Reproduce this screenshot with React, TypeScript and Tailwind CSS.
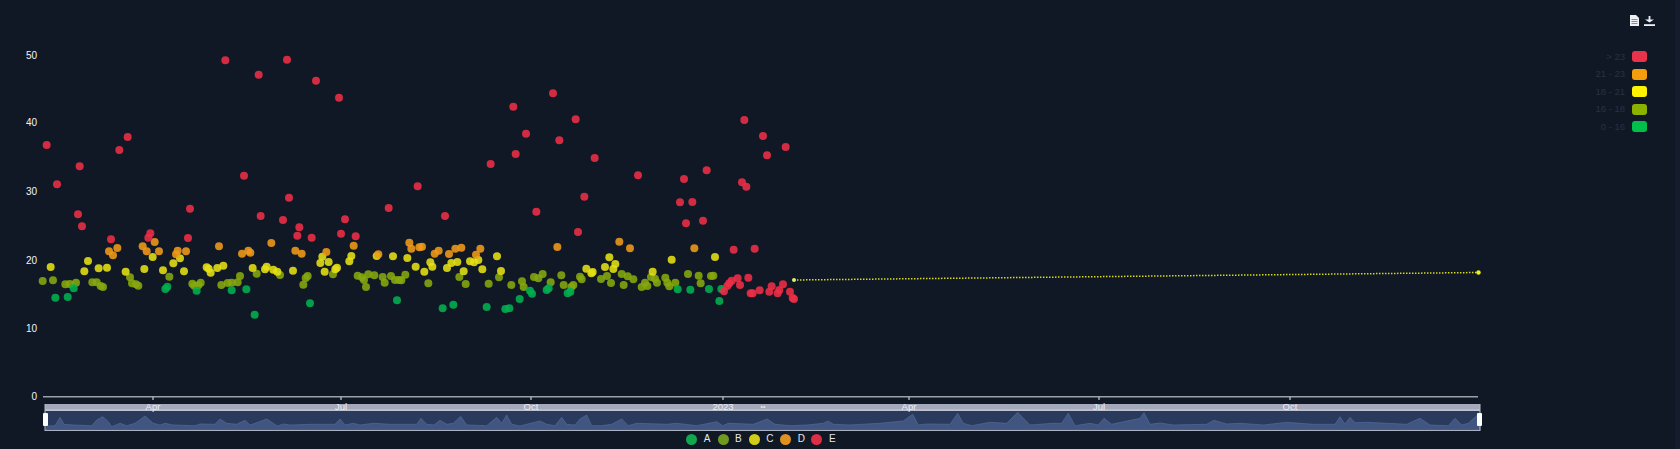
const font = { fontFamily: '"Liberation Sans", Arial, sans-serif' };

// points read off the chart, in crop coordinates: [x, y] -> left part
const left: Record<string, number[][]> = {
  red: [[140,345],[171,463],[239,409],[234,553],[246,589],[358,360],[383,321],[333,628],[451,610],[445,623],[570,536],[564,624],[676,91],[776,134],[861,89],[948,152],[1017,203],[732,437],[867,503],[782,558],[849,570],[898,592],[892,617],[935,623],[1035,568],[1023,611],[1067,619],[1166,534],[1253,469]],
  orange: [[327,664],[339,676],[352,654],[428,649],[440,664],[464,636],[477,664],[533,662],[528,673],[558,664],[657,649],[726,671],[745,662],[751,668],[814,639],[886,662],[905,671],[979,666],[1061,647],[1135,673],[1228,638],[1234,656],[1258,652]],
  yellow: [[152,711],[253,724],[264,693],[296,715],[321,713],[377,725],[433,717],[458,681],[489,721],[520,700],[540,685],[552,724],[620,712],[626,716],[632,728],[652,714],[670,707],[758,714],[795,718],[800,710],[820,719],[832,725],[879,722],[961,699],[967,680],[974,725],[986,696],[1006,718],[1011,713],[1048,694],[1054,678],[1130,678],[1179,679],[1222,684],[1247,710]],
  olive: [[128,753],[159,751],[196,763],[209,762],[228,758],[277,757],[290,757],[302,768],[309,771],[390,742],[396,760],[408,763],[415,767],[508,740],[577,761],[583,767],[595,766],[602,758],[664,765],[683,759],[695,758],[713,757],[720,738],[770,731],[840,735],[910,764],[917,744],[923,738],[999,733],[1073,737],[1086,742],[1092,750],[1098,771],[1105,733],[1123,736],[1148,741],[1154,758],[1173,738],[1185,750],[1197,750],[1204,751],[1216,734]],
  green: [[166,803],[203,801],[221,775],[496,777],[502,770],[590,782],[695,781],[739,778],[764,854],[930,820],[1191,811]],
};

const right: Record<string, number[][]> = {
  red: [[280,230],[399,190],[318,311],[467,268],[418,331],[287,372],[524,384],[212,402],[654,436],[75,558],[349,545],[493,500],[474,606],[792,447],[860,421],[780,517],[817,516],[798,580],[849,572],[973,270],[1029,318],[1041,376],[1097,351],[966,457],[979,470],[941,659],[1004,656],[985,743],[953,745],[935,752],[928,760],[922,768],[960,765],[912,784],[992,790],[998,790],[1019,781],[1048,785],[1055,769],[1073,790],[1078,780],[1089,763],[1110,785],[1118,804],[1122,807]],
  orange: [[6,650],[44,671],[56,662],[87,672],[106,656],[124,653],[168,674],[181,656],[412,651],[598,635],[630,655],[823,655]],
  yellow: [[13,725],[31,697],[37,710],[81,714],[94,699],[112,696],[131,724],[150,694],[162,697],[175,690],[187,718],[231,679],[243,723],[499,716],[514,730],[518,726],[555,711],[568,682],[580,717],[586,702],[698,725],[755,689],[885,681]],
  olive: [[25,760],[118,741],[137,762],[206,761],[237,742],[274,765],[306,754],[311,771],[342,741],[355,745],[368,732],[392,757],[424,736],[431,765],[460,765],[454,771],[480,740],[485,748],[543,747],[561,738],[573,759],[605,732],[623,739],[640,748],[611,765],[665,771],[675,758],[682,768],[693,741],[705,746],[711,758],[736,743],[742,758],[748,769],[766,758],[804,732],[836,737],[842,760],[873,738],[880,737]],
  green: [[68,835],[100,824],[200,831],[256,837],[268,835],[299,807],[330,782],[336,791],[380,780],[386,775],[443,790],[451,785],[773,778],[811,779],[867,777],[898,813],[904,777]],
};

const series = [
  { key: "olive", cls: "fill-[#86a80e]" },
  { key: "green", cls: "fill-[#00b050]" },
  { key: "yellow", cls: "fill-[#e6e015]" },
  { key: "orange", cls: "fill-[#f09a18]" },
  { key: "red", cls: "fill-[#ee2e47]" },
];

// navigator outline, one list per crop with its x offset
const navCrops: [number, number[][]][] = [
  [40, [[22,93],[45,92],[60,67],[72,88],[100,90],[155,92],[170,75],[188,65],[205,80],[215,95],[240,85],[260,92],[285,85],[315,63],[340,85],[360,90],[375,85],[400,90],[465,92],[480,87],[525,88],[540,72],[560,85],[590,88],[615,76],[630,90],[650,83],[680,72],[700,85],[712,93],[730,87]]],
  [290, [[0,90],[70,88],[135,88],[150,72],[165,90],[190,85],[210,90],[250,85],[300,88],[380,88],[393,70],[410,88],[432,90],[450,76],[470,88],[490,85],[512,64],[530,90],[590,92],[620,67],[635,85],[650,60],[665,88],[690,93]]],
  [540, [[0,78],[20,88],[45,92],[65,67],[80,88],[105,90],[120,72],[140,60],[155,92],[185,92],[215,88],[245,72],[265,92],[290,85],[380,88],[410,85],[470,92],[530,80],[548,92],[565,85],[640,88],[682,72],[705,88]]],
  [790, [[0,92],[50,90],[100,85],[115,78],[130,88],[180,90],[270,85],[340,78],[368,58],[385,90],[410,87],[480,88],[503,55],[520,85],[545,92],[600,82],[650,85],[683,52],[720,90],[790,85],[815,85],[835,55],[855,92],[900,85],[925,90],[942,70],[965,88]]],
  [1140, [[0,70],[12,53],[30,88],[60,84],[100,90],[200,88],[222,76],[260,87],[300,85],[370,90],[440,82],[520,88],[585,88],[600,65],[615,88],[630,67],[645,83],[680,82],[800,88],[840,70],[870,90],[925,92],[945,70],[965,90],[985,85],[1010,62],[1020,85]]],
];

const navLine = navCrops
  .flatMap(([off, pts]) => pts.map(([x, y]) => `${(off + x / 3).toFixed(1)},${(395 + y / 3).toFixed(1)}`))
  .join(" L");

const yLabels = [
  { label: "50", y: 59 },
  { label: "40", y: 126 },
  { label: "30", y: 195 },
  { label: "20", y: 264 },
  { label: "10", y: 332 },
  { label: "0", y: 400 },
];

const months = [
  { label: "Apr", x: 153 },
  { label: "Jul", x: 341 },
  { label: "Oct", x: 531 },
  { label: "2023", x: 723 },
  { label: "Apr", x: 909 },
  { label: "Jul", x: 1099 },
  { label: "Oct", x: 1290 },
];

const ranges = [
  { label: "> 23", cls: "bg-[#e8334a]" },
  { label: "21 - 23", cls: "bg-[#f59e0b]" },
  { label: "18 - 21", cls: "bg-[#fff200]" },
  { label: "16 - 18", cls: "bg-[#8cb200]" },
  { label: "0 - 16", cls: "bg-[#00c04b]" },
];

const grades = [
  { label: "A", cls: "bg-[#10a84e]" },
  { label: "B", cls: "bg-[#6f9a1e]" },
  { label: "C", cls: "bg-[#d0cc1a]" },
  { label: "D", cls: "bg-[#e0901e]" },
  { label: "E", cls: "bg-[#dc2f45]" },
];

function Chart() {
  return (
    <svg width="1520" height="434" className="block" style={font}>
      {yLabels.map((t) => (
        <text key={t.label} x="37" y={t.y} textAnchor="end" fontSize="10" className="fill-[#f3f4f6]">
          {t.label}
        </text>
      ))}

      {series.map((s) => (
        <g key={s.key} className={s.cls} fillOpacity="0.88">
          {left[s.key].map(([x, y], i) => (
            <circle key={i} cx={x / 3} cy={30 + y / 3} r="4" />
          ))}
          {right[s.key].map(([x, y], i) => (
            <circle key={i} cx={420 + x / 3} cy={30 + y / 3} r="4" />
          ))}
        </g>
      ))}

      <line x1="794" y1="280" x2="1478" y2="272.5" strokeWidth="1.5" strokeDasharray="1.5 1.5" className="stroke-[#d9d916]" />
      <circle cx="794" cy="280" r="2" className="fill-[#d8f06a]" />
      <circle cx="1478.5" cy="272.5" r="2.2" className="fill-[#f2f01c]" />

      <rect x="43" y="396" width="1435" height="1.5" className="fill-[#9aa0a8]" />
      {months.map((m) => (
        <rect key={m.x} x={m.x - 0.5} y="397" width="1" height="3" className="fill-[#e5e7eb]" />
      ))}

      <rect x="45" y="404" width="1435" height="7" className="fill-[#a3a8bb]" />
      <rect x="45" y="409.5" width="1435" height="1.2" className="fill-[#c9ccd8]" />
      <rect x="45" y="411" width="1435" height="19" className="fill-[#2a3a5c]" />
      <path d={`M${navLine} L1480,430 L46,430 Z`} className="fill-[#405680] stroke-[#52699a]" strokeWidth="0.7" />
      <rect x="45" y="430" width="1435" height="1" className="fill-[#a9afbe]" />
      <rect x="44.5" y="404" width="1" height="27" className="fill-[#b5bac8]" />
      <rect x="1479.5" y="404" width="1" height="27" className="fill-[#b5bac8]" />
      <rect x="43" y="413" width="5" height="13" rx="1" className="fill-white" />
      <rect x="1477" y="413" width="5" height="13" rx="1" className="fill-white" />

      {months.map((m) => (
        <text key={m.x} x={m.x} y="410" textAnchor="middle" fontSize="9.5" className="fill-[#eceef4]">
          {m.label}
        </text>
      ))}
      <text x="763" y="409" textAnchor="middle" fontSize="7" className="fill-[#e5e7eb]">
        ••
      </text>
    </svg>
  );
}

function ExportIcons() {
  return (
    <div className="flex justify-end gap-[5px] pr-[20px] h-[11px]">
      <svg width="9" height="11" viewBox="0 0 9 11">
        <path d="M0 0h6l3 3v8H0z" className="fill-[#eef0f4]" />
        <path d="M1.5 4.5h6M1.5 6.5h6M1.5 8.5h6" strokeWidth="0.8" className="stroke-[#667788]" />
      </svg>
      <svg width="11" height="11" viewBox="0 0 11 11">
        <path d="M4.6 1h1.8v3.5H10L5.5 7.6 1 4.5h3.6z" className="fill-[#eef0f4]" />
        <path d="M0 9.2h11V11H0z" className="fill-[#eef0f4]" />
      </svg>
    </div>
  );
}

export default function App() {
  return (
    <div className="w-[1680px] h-[449px] overflow-hidden bg-[#101826] flex" style={font}>
      <div className="w-[1520px] flex flex-col">
        <Chart />
        <div className="flex justify-center ml-[9px]">
          {grades.map((g) => (
            <div key={g.label} className="w-[31.3px] flex items-center gap-[6.5px] h-[10px]">
              <span className={`w-[11px] h-[11px] shrink-0 rounded-full ${g.cls}`} />
              <span className="text-[10px] leading-none text-[#e5e7eb]">{g.label}</span>
            </div>
          ))}
        </div>
      </div>

      <div className="w-[155px] pt-[15px]">
        <ExportIcons />
        <div className="mt-[25px] flex flex-col gap-[6.5px] pr-[28px]">
          {ranges.map((r) => (
            <div key={r.label} className="flex justify-end items-center gap-[7px] h-[11px]">
              <span className="text-[9.5px] leading-none text-[#2a3140]">{r.label}</span>
              <span className={`w-[15px] h-[11px] rounded-[3px] ${r.cls}`} />
            </div>
          ))}
        </div>
      </div>

      <div className="w-[5px] bg-[#151d2c]" />
    </div>
  );
}
